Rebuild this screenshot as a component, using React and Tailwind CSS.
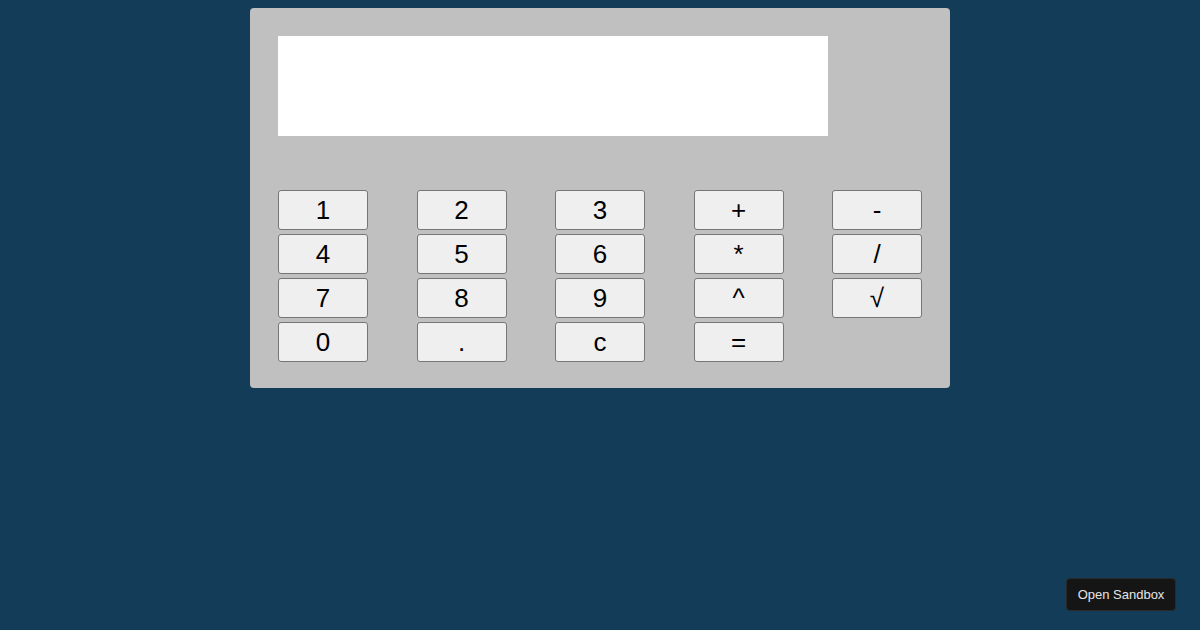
const rows = [
  ['1', '2', '3', '+', '-'],
  ['4', '5', '6', '*', '/'],
  ['7', '8', '9', '^', '√'],
  ['0', '.', 'c', '=', null],
];

const Key = ({ label }) => {
  if (!label) return <div className="w-[90px] h-[40px]" />;
  return (
    <button
      type="button"
      className="w-[90px] h-[40px] bg-[#efefef] border border-[#767676] rounded-[3px] text-[26px] leading-none text-black flex items-center justify-center"
    >
      {label}
    </button>
  );
};

export default function App() {
  return (
    <div
      className="min-h-screen w-full bg-[#123c58] relative"
      style={{ fontFamily: '"Liberation Sans", Arial, sans-serif' }}
    >
      <div className="flex justify-center pt-[8px]">
        <div className="w-[700px] bg-[#c0c0c0] rounded-[4px] px-[28px] pt-[28px] pb-[26px]">
          <div className="w-[550px] h-[100px] bg-white" />
          <div className="mt-[54px] flex flex-col gap-[4px]">
            {rows.map((row, i) => (
              <div key={i} className="flex justify-between">
                {row.map((k, j) => (
                  <Key key={j} label={k} />
                ))}
              </div>
            ))}
          </div>
        </div>
      </div>
      <button
        type="button"
        className="absolute right-[24px] bottom-[19px] w-[110px] h-[33px] bg-[#151515] border border-[#2a2a2a] rounded-[4px] text-[13px] text-[#e6e6e6]"
      >
        Open Sandbox
      </button>
    </div>
  );
}
